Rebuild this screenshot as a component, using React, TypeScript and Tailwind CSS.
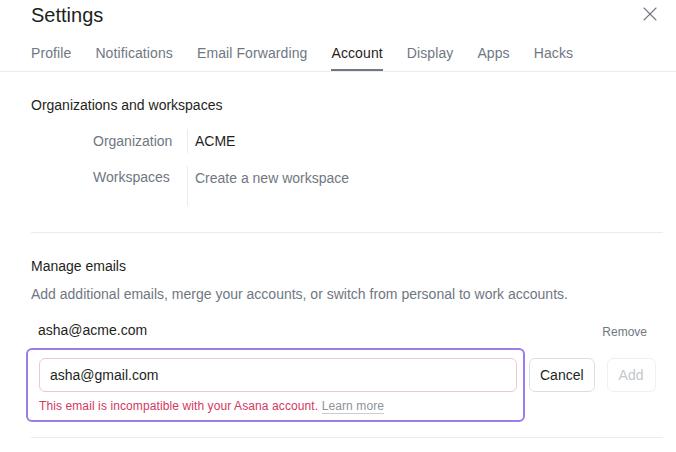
import { X } from 'lucide-react'

const tabs = ['Profile', 'Notifications', 'Email Forwarding', 'Account', 'Display', 'Apps', 'Hacks']

export default function App() {
  return (
    <div
      className="h-[452px] w-[676px] overflow-hidden bg-white text-[#1e1f21]"
      style={{ fontFamily: '"Liberation Sans", Arial, sans-serif' }}
    >
      {/* header */}
      <div className="flex items-start justify-between pl-[31px] pr-[14px] pt-[3px]">
        <h1 className="text-[20px] leading-[24px] text-[#1e1f21]">Settings</h1>
        <X size={24} strokeWidth={1.1} className="-mt-[1px] text-[#6f7782]" />
      </div>

      {/* tabs */}
      <div className="mt-[16px] flex gap-[24px] border-b border-[#e8ecee] pl-[31px]">
        {tabs.map((tab) => (
          <div
            key={tab}
            className={
              tab === 'Account'
                ? 'border-b-2 border-[#6f7782] pb-[6px] text-[14px] leading-[20px] tracking-[0.1px] text-[#1e1f21]'
                : 'border-b-2 border-transparent pb-[6px] text-[14px] leading-[20px] tracking-[0.1px] text-[#6f7782]'
            }
          >
            {tab}
          </div>
        ))}
      </div>

      {/* organizations */}
      <div className="ml-[31px] mr-[13px] border-b border-[#e8ecee] pb-[26px] pt-[23px]">
        <div className="text-[14px] leading-[20px] text-[#1e1f21]">Organizations and workspaces</div>
        <div className="mt-[14px] flex">
          <div className="w-[156px] py-[2px] pl-[62px] text-[14px] leading-[20px] text-[#6f7782]">Organization</div>
          <div className="border-l border-[#e8ecee] py-[2px] pl-[7px] text-[14px] leading-[20px] text-[#1e1f21]">ACME</div>
        </div>
        <div className="mt-[13px] flex">
          <div className="w-[156px] pl-[62px] pt-[1px] text-[14px] leading-[20px] text-[#6f7782]">Workspaces</div>
          <div className="h-[40px] border-l border-[#e8ecee] pl-[7px] pt-[2px] text-[14px] leading-[20px] text-[#6f7782]">
            Create a new workspace
          </div>
        </div>
      </div>

      {/* manage emails */}
      <div className="ml-[31px] mr-[13px] border-b border-[#e8ecee] pt-[23px]">
        <div className="text-[14px] leading-[20px] text-[#1e1f21]">Manage emails</div>
        <div className="mt-[8px] text-[14px] leading-[20px] text-[#6f7782]">
          Add additional emails, merge your accounts, or switch from personal to work accounts.
        </div>
        <div className="mt-[16px] flex items-end justify-between pl-[7px] pr-[16px]">
          <span className="text-[14px] leading-[20px] text-[#1e1f21]">asha@acme.com</span>
          <span className="text-[12px] leading-[16px] text-[#6f7782]">Remove</span>
        </div>
        <div className="-ml-[5px] mt-[8px] flex items-start gap-[4px] pb-[15px]">
          <div className="w-[499px] rounded-[6px] border-2 border-[#9c7ce6] pb-[6px] pl-[11px] pr-[6px] pt-[8px]">
            <div className="flex h-[34px] items-center rounded-[6px] border border-[#f3c6cc] px-[10px] text-[14px] text-[#1e1f21]">
              asha@gmail.com
            </div>
            <div className="mt-[6px] text-[12px] leading-[16px] tracking-[0.1px] text-[#d3385f]">
              This email is incompatible with your Asana account.{' '}
              <span className="border-b border-[#c8cdd1] text-[#8e939b]">Learn more</span>
            </div>
          </div>
          <div className="mt-[10px] flex h-[34px] items-center rounded-[6px] border border-[#dcdfe2] px-[10px] text-[14px] text-[#1e1f21]">
            Cancel
          </div>
          <div className="ml-[8px] mt-[10px] flex h-[34px] items-center rounded-[6px] border border-[#eef0f2] px-[11px] text-[14px] text-[#c4c8cc]">
            Add
          </div>
        </div>
      </div>
    </div>
  )
}
